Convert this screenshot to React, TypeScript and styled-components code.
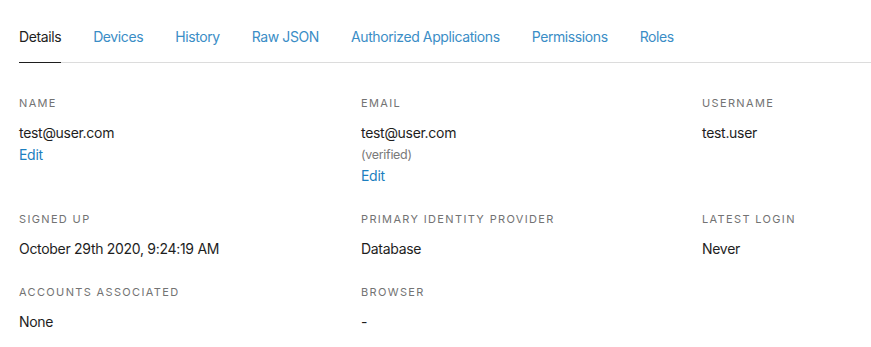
import React from 'react';
import styled, { createGlobalStyle } from 'styled-components';

const GlobalStyle = createGlobalStyle`
  body {
    margin: 0;
    background: #fff;
    font-family: Inter, "Noto Sans", sans-serif;
    color: #1e1e1e;
  }
`;

interface Field {
  label: string;
  lines: { text: string; kind?: 'muted' | 'link' }[];
}

const tabs = [
  'Details',
  'Devices',
  'History',
  'Raw JSON',
  'Authorized Applications',
  'Permissions',
  'Roles',
];

const fields: Field[] = [
  {
    label: 'Name',
    lines: [{ text: 'test@user.com' }, { text: 'Edit', kind: 'link' }],
  },
  {
    label: 'Email',
    lines: [
      { text: 'test@user.com' },
      { text: '(verified)', kind: 'muted' },
      { text: 'Edit', kind: 'link' },
    ],
  },
  { label: 'Username', lines: [{ text: 'test.user' }] },
  { label: 'Signed Up', lines: [{ text: 'October 29th 2020, 9:24:19 AM' }] },
  { label: 'Primary Identity Provider', lines: [{ text: 'Database' }] },
  { label: 'Latest Login', lines: [{ text: 'Never' }] },
  { label: 'Accounts Associated', lines: [{ text: 'None' }] },
  { label: 'Browser', lines: [{ text: '-' }] },
];

export default function App() {
  return (
    <Page>
      <GlobalStyle />
      <TabBar>
        {tabs.map((t, i) => (
          <Tab key={t} active={i === 0}>
            {t}
          </Tab>
        ))}
      </TabBar>
      <FieldGrid>
        {fields.map(f => (
          <Cell key={f.label}>
            <Label>{f.label}</Label>
            {f.lines.map((l, i) => (
              <Value key={i} kind={l.kind}>
                {l.text}
              </Value>
            ))}
          </Cell>
        ))}
      </FieldGrid>
    </Page>
  );
}

const Page = styled.div`
  padding-left: 19px;
  overflow: hidden;
`;

const TabBar = styled.nav`
  display: flex;
  gap: 32px;
  padding-top: 27px;
  border-bottom: 1px solid #dcdcdc;
`;

const Tab = styled.a<{ active?: boolean }>`
  font-size: 14px;
  letter-spacing: -0.4px;
  line-height: 20px;
  padding-bottom: 15px;
  margin-bottom: -1px;
  color: ${p => (p.active ? '#1e1e1e' : '#3a8dc6')};
  border-bottom: 1px solid ${p => (p.active ? '#1e1e1e' : 'transparent')};
  cursor: pointer;
`;

const FieldGrid = styled.div`
  display: grid;
  grid-template-columns: 342px 341px 1fr;
  padding-top: 32px;
`;

const Cell = styled.div`
  display: flex;
  flex-direction: column;
  margin-bottom: 24.5px;
`;

const Label = styled.div`
  font-size: 11px;
  line-height: 16px;
  letter-spacing: 1.35px;
  text-transform: uppercase;
  color: #737373;
  margin-bottom: 11px;
`;

const Value = styled.div<{ kind?: 'muted' | 'link' }>`
  font-size: ${p => (p.kind === 'muted' ? '12.5px' : '14px')};
  letter-spacing: -0.3px;
  line-height: 21.5px;
  color: ${p =>
    p.kind === 'link' ? '#1c7fc0' : p.kind === 'muted' ? '#7a7a7a' : '#1e1e1e'};
  cursor: ${p => (p.kind === 'link' ? 'pointer' : 'default')};
`;
